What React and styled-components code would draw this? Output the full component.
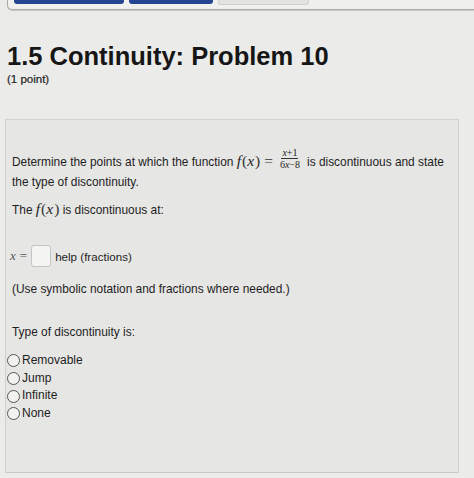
import React from "react";
import styled, { createGlobalStyle } from "styled-components";

const GlobalStyle = createGlobalStyle`
  html, body {
    margin: 0;
    padding: 0;
    background: #ebebe9;
  }
  body {
    font-family: "Liberation Sans", Arial, sans-serif;
    color: #1e1e1e;
    width: 474px;
    height: 478px;
    overflow: hidden;
  }
`;

const TopBar = styled.div`
  margin-left: 7px;
  height: 9px;
  border: 1px solid #a9a9a9;
  border-top: none;
  border-right: none;
  border-radius: 0 0 0 5px;
  background: #f0f0ef;
  box-shadow: 0 1px 1px rgba(0, 0, 0, 0.15);
  display: flex;
  gap: 5px;
  padding-left: 6px;
`;

const NavButton = styled.div`
  width: ${(p) => p.$w}px;
  height: 4px;
  border-radius: 0 0 3px 3px;
  background: ${(p) => (p.$active ? "#e3e3e2" : "#254592")};
  border: ${(p) => (p.$active ? "1px solid #cfcfcf" : "none")};
  border-top: none;
`;

const Title = styled.h1`
  margin: 32px 0 0 7px;
  font-size: 25.5px;
  line-height: 28px;
  font-weight: bold;
  color: #161616;
`;

const Points = styled.div`
  margin: 2px 0 0 7px;
  font-size: 11.5px;
  line-height: 14px;
  color: #222;
  -webkit-text-stroke: 0.2px #222;
`;

const Panel = styled.div`
  margin: 33px 0 0 5px;
  border: 1px solid #d2d2d0;
  border-bottom-color: #c8c8c6;
  background: #e6e6e4;
  padding: 32px 0 0 6px;
  box-sizing: content-box;
  width: 446px;
  height: 320px;
`;

const Para = styled.p`
  margin: ${(p) => p.$mt || 0}px 0 0 0;
  font-size: 11.9px;
  line-height: 20px;
  width: 440px;
`;

const MathI = styled.span`
  font-family: "Liberation Serif", "Times New Roman", serif;
  font-style: italic;
  font-size: 15.5px;
  line-height: 16px;
  padding-right: 1px;
`;

const MathR = styled.span`
  font-family: "Liberation Serif", "Times New Roman", serif;
  font-size: 15.5px;
  line-height: 16px;
  color: #333;
`;

const Frac = styled.span`
  display: inline-flex;
  flex-direction: column;
  align-items: center;
  vertical-align: middle;
  font-family: "Liberation Serif", "Times New Roman", serif;
  font-size: 10px;
  line-height: 9px;
  margin: -6px 7px 0 7px;
  position: relative;
  top: -1px;
`;

const FracTop = styled.span`
  border-bottom: 1px solid #333;
  padding: 0 1px 1px;
`;

const FracBottom = styled.span`
  padding-top: 1px;
`;

const AnswerRow = styled.div`
  margin-top: 25px;
  display: flex;
  align-items: center;
  gap: 4px;
  font-size: 11.6px;
  margin-left: -2px;
`;

const Eq = styled.span`
  font-family: "Liberation Serif", "Times New Roman", serif;
  font-size: 13px;
  color: #555;
  display: flex;
  gap: 4px;
`;

const AnswerBox = styled.span`
  width: 18px;
  height: 20px;
  border: 1px solid #c4c4c2;
  border-radius: 3px;
  background: #f4f4f3;
  display: inline-block;
`;

const Options = styled.div`
  margin-top: 10px;
  margin-left: -5px;
  display: flex;
  flex-direction: column;
`;

const Option = styled.label`
  display: flex;
  align-items: center;
  gap: 2px;
  font-size: 12px;
  line-height: 17.7px;
`;

const Radio = styled.span`
  width: 11px;
  height: 11px;
  border-radius: 50%;
  border: 1px solid #555;
  background: #f2f2f1;
  display: inline-block;
`;

export default function App() {
  return (
    <>
      <GlobalStyle />
      <TopBar>
        <NavButton $w={110} />
        <NavButton $w={84} />
        <NavButton $w={89} $active />
      </TopBar>
      <Title>1.5 Continuity: Problem 10</Title>
      <Points>(1 point)</Points>
      <Panel>
        <Para>
          Determine the points at which the function <MathI>f</MathI>
          <MathR>(</MathR>
          <MathI>x</MathI>
          <MathR>) =</MathR>
          <Frac>
            <FracTop>
              <i>x</i>+1
            </FracTop>
            <FracBottom>
              6<i>x</i>−8
            </FracBottom>
          </Frac>
          is discontinuous and state the type of discontinuity.
        </Para>
        <Para $mt={8}>
          The <MathI>f</MathI>
          <MathR>(</MathR>
          <MathI>x</MathI>
          <MathR>)</MathR> is discontinuous at:
        </Para>
        <AnswerRow>
          <Eq>
            <i>x</i>=
          </Eq>
          <AnswerBox />
          <span>help (fractions)</span>
        </AnswerRow>
        <Para $mt={12}>(Use symbolic notation and fractions where needed.)</Para>
        <Para $mt={23}>Type of discontinuity is:</Para>
        <Options>
          {["Removable", "Jump", "Infinite", "None"].map((o) => (
            <Option key={o}>
              <Radio />
              {o}
            </Option>
          ))}
        </Options>
      </Panel>
    </>
  );
}
